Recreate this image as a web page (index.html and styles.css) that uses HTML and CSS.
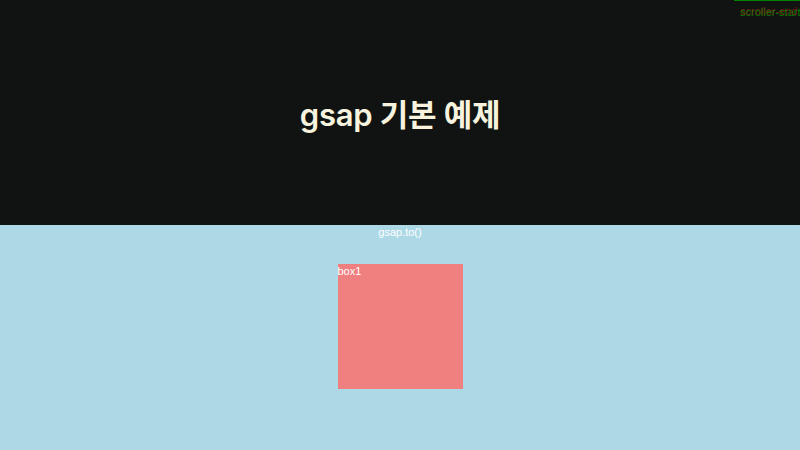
FILE: index.html
```html
<!DOCTYPE html>
<html lang="ko">
<head>
<meta charset="UTF-8">
<meta name="viewport" content="width=device-width, initial-scale=1.0">
<title>gsap 기본 예제</title>
<link rel="stylesheet" href="styles.css">
</head>
<body>
  <header class="intro">
    <h1>gsap 기본 예제</h1>
  </header>
  <section class="section">
    <p class="section-title">gsap.to()</p>
    <div class="box">box1</div>
  </section>

  <!-- scroll trigger markers -->
  <div class="marker marker-start">scroller-start</div>
  <div class="marker marker-end">scroller-end</div>
</body>
</html>
```

FILE: styles.css
```css
* {
  box-sizing: border-box;
}

html,
body {
  overflow: hidden;
}

body {
  margin: 0;
  font-family: "Liberation Sans", Arial, sans-serif;
  background-color: lightblue;
}

.intro {
  height: 225px;
  background-color: #111312;
  display: flex;
  justify-content: center;
  align-items: center;
}

.intro h1 {
  margin: 0;
  color: #f7f3de;
  font-family: Inter, "Noto Sans CJK KR", sans-serif;
  font-size: 31px;
  font-weight: 600;
  letter-spacing: -0.3px;
}

.section {
  display: flex;
  flex-direction: column;
  align-items: center;
  height: 225px;
}

.section-title {
  margin: 0;
  color: #fff;
  font-size: 11px;
  line-height: 14px;
}

.box {
  width: 125px;
  height: 125px;
  margin-top: 25px;
  background-color: lightcoral;
  color: #fff;
  font-size: 11px;
  line-height: 14px;
}

.marker {
  position: absolute;
  top: 0;
  left: 740px;
  padding-top: 4px;
  font-size: 11px;
  line-height: 14px;
  white-space: nowrap;
}

.marker-start {
  color: green;
  border-top: 1px solid green;
  left: 734px;
  padding-left: 6px;
  width: 66px;
  overflow: hidden;
}

.marker-end {
  color: #b22;
  opacity: 0.5;
}
```
